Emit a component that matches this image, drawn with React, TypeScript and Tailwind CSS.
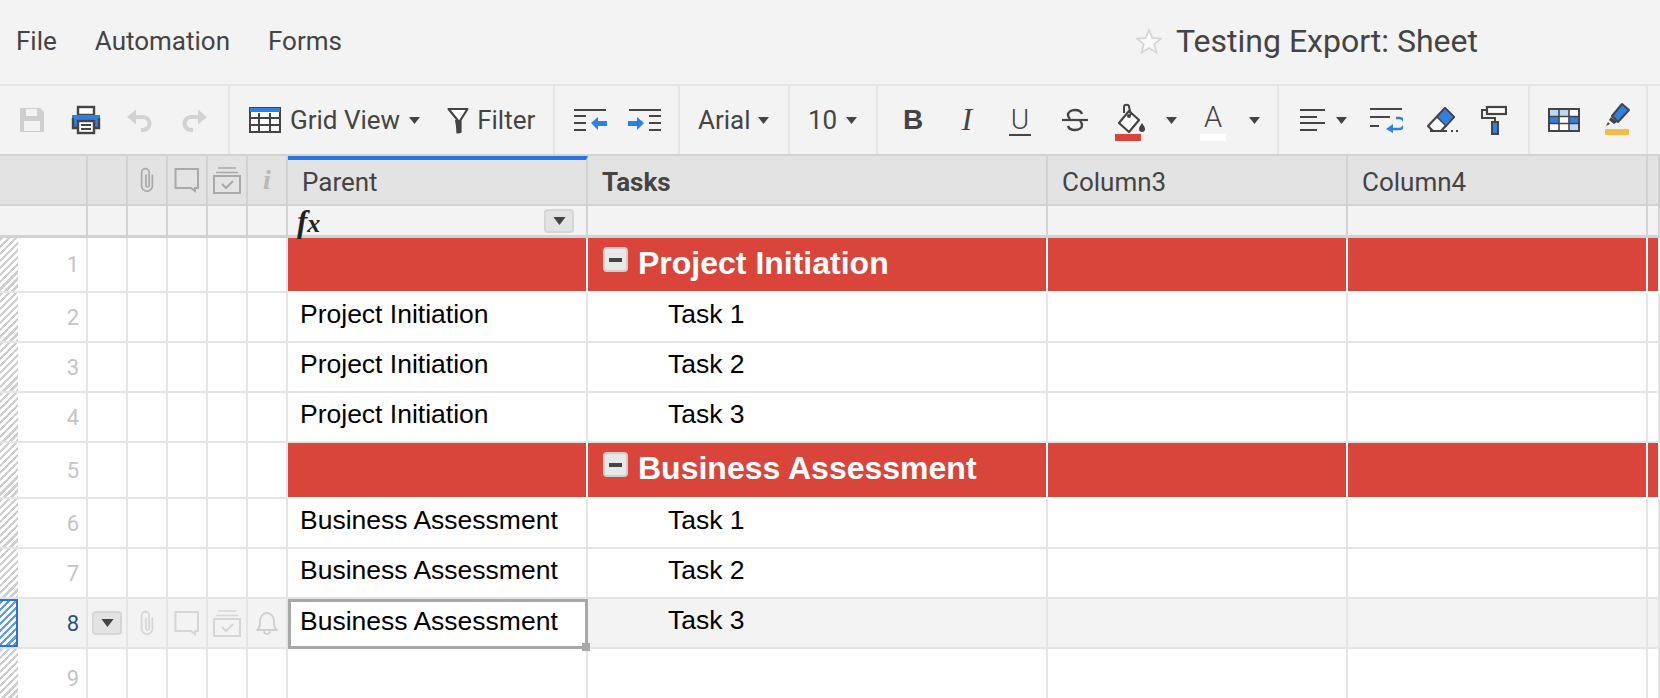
import React from "react";

const roboto = "font-['Roboto',sans-serif]";
const arial = "font-['Liberation_Sans',Arial,sans-serif]";

function Caret({ className = "" }: { className?: string }) {
  return (
    <svg width="13" height="9" viewBox="0 0 13 9" className={className}>
      <path d="M1 1h11L6.500 8z" fill="#444" />
    </svg>
  );
}

function Ic({ w = 32, h = 32, children }: { w?: number; h?: number; children: React.ReactNode }) {
  return (
    <svg width={w} height={h} viewBox={`0 0 ${w} ${h}`} fill="none">
      {children}
    </svg>
  );
}

const D = "#444";
const B = "#2f80e4";

const Save = () => (
  <Ic>
    <path d="M4 4h20l4 4v20H4z" fill="#cfcfcf" />
    <rect x="10" y="5" width="11" height="7" fill="#f3f3f3" />
    <rect x="8" y="17" width="16" height="10" fill="#f3f3f3" />
  </Ic>
);
const Print = () => (
  <Ic>
    <rect x="8" y="3" width="16" height="8" fill="#fff" stroke={D} strokeWidth="2.400" />
    <path d="M2 11h28v14h-5v-5H7v5H2z" fill={B} />
    <path d="M3 14v10h4M29 14v10h-4" stroke={D} strokeWidth="2.400" />
    <rect x="8" y="17" width="16" height="12" fill="#fff" stroke={D} strokeWidth="2.400" />
    <path d="M11 21h10M11 25h10" stroke={D} strokeWidth="2" />
  </Ic>
);
const Undo = () => (
  <Ic>
    <path d="M9 13h10a6.500 6.500 0 0 1 0 13h-2" stroke="#d2d2d2" strokeWidth="4.200" />
    <path d="M12 5.500v15L3 13z" fill="#d2d2d2" />
  </Ic>
);
const Redo = () => (
  <Ic>
    <path d="M23 13H13a6.500 6.500 0 0 0 0 13h2" stroke="#d2d2d2" strokeWidth="4.200" />
    <path d="M20 5.500v15L29 13z" fill="#d2d2d2" />
  </Ic>
);
const GridIc = () => (
  <Ic w={32} h={26}>
    <rect x="1" y="1" width="30" height="24" fill="#fff" stroke={D} strokeWidth="2" />
    <rect x="1" y="1" width="30" height="4" fill={B} />
    <path d="M1 11h30M1 18h30M10 6v19M21 6v19" stroke={D} strokeWidth="2" />
  </Ic>
);
const FilterIc = () => (
  <Ic w={22} h={28}>
    <path d="M1.500 3h19l-7 11v12l-3 .5V14z" fill="#fff" stroke={D} strokeWidth="2.200" strokeLinejoin="round" />
    <path d="M8 14h6v13h-4z" fill={D} />
  </Ic>
);
const Indent = ({ flip }: { flip?: boolean }) => (
  <Ic w={34} h={24}>
    <g transform={flip ? "translate(34 0) scale(-1 1)" : undefined}>
      <path d="M1 2h32M1 8h12M1 15h12M1 22h12" stroke={D} strokeWidth="2" />
      <path d="M18 15l7-6v4h9v5h-9v4z" fill={B} />
    </g>
  </Ic>
);
const Strike = () => (
  <Ic w={28} h={28}>
    <path d="M21 8c-1-3-4-4-7-4-4 0-7 2-7 5 0 2 1 3 2 4M7 20c1 3 4 4 7 4 4 0 7-2 7-5 0-2-1-3-2-4" stroke={D} strokeWidth="2.400" />
    <path d="M1 14h26" stroke={D} strokeWidth="2.200" />
  </Ic>
);
const Paint = () => (
  <Ic w={30} h={36}>
    <path d="M13 8L3 20l10 9 10-12z" fill="#fff" stroke={D} strokeWidth="2.200" strokeLinejoin="round" />
    <path d="M8 10V4c0-3 5-3 5 0l2 8" stroke={D} strokeWidth="2" />
    <circle cx="13" cy="13" r="2" fill={D} />
    <path d="M26 20c2 3 3 4 3 6a3 3 0 0 1-6 0c0-2 1-3 3-6z" fill={D} />
  </Ic>
);
const Align = () => (
  <Ic w={28} h={24}>
    <path d="M2 2h25M2 9h17M2 15h25M2 22h17" stroke={D} strokeWidth="2" />
  </Ic>
);
const Wrap = () => (
  <Ic w={34} h={28}>
    <path d="M1 3h32M1 11h20M1 20h9" stroke={D} strokeWidth="2" />
    <path d="M27 12h3a3.500 3.500 0 0 1 0 11H21" stroke={B} strokeWidth="2.600" fill="none" />
    <path d="M24 18l-7 5 7 4z" fill={B} />
  </Ic>
);
const Eraser = () => (
  <Ic w={32} h={28}>
    <path d="M18 2l9 9-13 14H6l-5-5z" fill="#fff" stroke={D} strokeWidth="2.200" strokeLinejoin="round" />
    <path d="M18 2l9 9-8 9-9-9z" fill={B} stroke={D} strokeWidth="1.500" />
    <path d="M3 25h17" stroke={D} strokeWidth="2" />
    <path d="M24 25h2M29 25h2" stroke={D} strokeWidth="2" />
  </Ic>
);
const Roller = () => (
  <Ic w={26} h={30}>
    <rect x="6" y="2" width="19" height="7" fill="#fff" stroke={D} strokeWidth="2.200" />
    <path d="M6 5H1v8h13v5" stroke={D} strokeWidth="2" />
    <rect x="11" y="17" width="6" height="12" fill={B} stroke={D} strokeWidth="2" />
  </Ic>
);
const TableIc = () => (
  <Ic w={32} h={24}>
    <rect x="1" y="1" width="30" height="22" fill="#fff" />
    <rect x="1" y="1" width="20" height="7" fill="#bcd9f3" />
    <rect x="1" y="9" width="10" height="6" fill={B} />
    <rect x="21" y="9" width="10" height="6" fill={B} />
    <rect x="21" y="16" width="10" height="6" fill="#bcd9f3" />
    <rect x="1" y="1" width="30" height="22" stroke={D} strokeWidth="2" />
    <path d="M1 8.500h30M1 15.500h30M11 1v22M21 1v22" stroke={D} strokeWidth="1.600" />
  </Ic>
);
const Marker = () => (
  <Ic w={26} h={34}>
    <path d="M18 1l7 6-11 12-6-6z" fill={B} stroke={D} strokeWidth="2" strokeLinejoin="round" />
    <path d="M7 14l6 5-3 2-5-4zM4 19l2 2-4 2z" fill={D} />
    <rect x="1" y="26" width="24" height="6" rx="1" fill="#f2bc46" />
  </Ic>
);
const Clip = ({ c = "#a9a9a9" }: { c?: string }) => (
  <svg width="18" height="28" viewBox="0 0 16 26" fill="none">
    <path d="M13 8v10.500a5 5 0 0 1-10 0V6a3.500 3.500 0 0 1 7 0v12a1.500 1.500 0 0 1-3 0V8" stroke={c} strokeWidth="1.600" />
  </svg>
);
const Comment = ({ c = "#a9a9a9" }: { c?: string }) => (
  <Ic w={26} h={26}>
    <path d="M1.500 2h22.500v19h-3v3l-4-3H1.500z" stroke={c} strokeWidth="2" fill="none" />
  </Ic>
);
const Proof = ({ c = "#a9a9a9" }: { c?: string }) => (
  <Ic w={28} h={28}>
    <path d="M5 2h18M3 6.500h22" stroke={c} strokeWidth="1.600" />
    <rect x="1" y="10" width="26" height="17" stroke={c} strokeWidth="2" />
    <path d="M9 18l4 4 7-7" stroke={c} strokeWidth="2" />
  </Ic>
);
const Bell = ({ c = "#cfcfcf" }: { c?: string }) => (
  <Ic w={22} h={26}>
    <path d="M1 20c3-2 3-5 3-9s3-8 7-8 7 4 7 8 0 7 3 9z" stroke={c} strokeWidth="1.800" strokeLinejoin="round" />
    <path d="M8 21c0 4 6 4 6 0" stroke={c} strokeWidth="1.600" />
  </Ic>
);
const Star = () => (
  <Ic w={26} h={26}>
    <path d="M13 2l3.300 8 8.700.7-6.700 5.400 2.200 8.600L13 20l-7.500 4.700 2.200-8.600L1 10.700 9.700 10z" fill="#fafafa" stroke="#d5d5d5" strokeWidth="1.800" />
  </Ic>
);

function DropBtn() {
  return (
    <span className="flex h-[24px] w-[30px] items-center justify-center rounded-[4px] border-2 border-[#d6d6d6] bg-[#e3e3e3]">
      <Caret className="h-[10px] w-[15px]" />
    </span>
  );
}

function Tool({ w = 54, children }: { w?: number; children: React.ReactNode }) {
  return (
    <div className="flex h-full shrink-0 items-center justify-center" style={{ width: w }}>
      {children}
    </div>
  );
}

function Group({ w, children }: { w: number; children: React.ReactNode }) {
  return (
    <div className="flex h-full shrink-0 items-center border-r-2 border-[#e5e5e5]" style={{ width: w }}>
      {children}
    </div>
  );
}

function Toolbar() {
  return (
    <div className={`flex h-[70px] border-b-2 border-[#d2d2d2] bg-[#f3f3f3] text-[26px] text-[#444] ${roboto}`}>
      <Group w={230}>
        <div className="w-[5px]" />
        <Tool><Save /></Tool>
        <Tool><Print /></Tool>
        <Tool><Undo /></Tool>
        <Tool><Redo /></Tool>
      </Group>
      <Group w={325}>
        <div className="flex items-center pl-[19px]">
          <GridIc />
          <span className="ml-[9px]">Grid View</span>
          <Caret className="ml-[8px]" />
          <span className="ml-[26px] flex"><FilterIc /></span>
          <span className="ml-[8px]">Filter</span>
        </div>
      </Group>
      <Group w={125}>
        <div className="flex items-center gap-[21px] pl-[18px]">
          <Indent />
          <Indent flip />
        </div>
      </Group>
      <Group w={110}>
        <span className="ml-[18px]">Arial</span>
        <Caret className="ml-[6px]" />
      </Group>
      <Group w={88}>
        <span className="ml-[18px]">10</span>
        <Caret className="ml-[8px]" />
      </Group>
      <Group w={401}>
        <div className="w-[8px]" />
        <Tool><span className={`text-[28px] font-bold ${arial}`}>B</span></Tool>
        <Tool><span className="font-['Liberation_Serif',serif] text-[31px] italic">I</span></Tool>
        <Tool>
          <span className="-ml-[2px] border-b-2 border-[#444] px-[2px] text-[28px] leading-[29px] font-light">U</span>
        </Tool>
        <Tool><Strike /></Tool>
        <div className="flex w-[58px] flex-col items-center pt-[4px]">
          <Paint />
          <div className="-mt-[5px] -ml-[6px] h-[7px] w-[26px] bg-[#d9453a]" />
        </div>
        <Tool w={22}><Caret /></Tool>
        <div className="ml-[8px] flex w-[46px] flex-col items-center pt-[2px]">
          <span className="text-[29px] leading-[31px] font-light">A</span>
          <div className="mt-[1px] h-[7px] w-[26px] bg-white" />
        </div>
        <Tool w={36}><Caret /></Tool>
      </Group>
      <Group w={251}>
        <div className="w-[19px]" />
        <Align />
        <Caret className="ml-[9px]" />
        <div className="ml-[21px] flex"><Wrap /></div>
        <div className="ml-[24px] flex"><Eraser /></div>
        <div className="ml-[22px] flex"><Roller /></div>
      </Group>
      <Group w={118}>
        <div className="ml-[18px] flex"><TableIc /></div>
        <div className="ml-[24px] flex"><Marker /></div>
      </Group>
    </div>
  );
}

const gridCols =
  "grid grid-rows-[100%] grid-cols-[88px_40px_40px_40px_40px_40px_300px_460px_300px_300px_12px]";

function HeaderRow() {
  const c = "flex items-center justify-center border-r-2 border-b-2 border-[#d2d2d2] bg-[#e3e3e3]";
  const t = "flex items-center pl-[14px] border-r-2 border-b-2 border-[#d2d2d2] bg-[#e3e3e3] text-[26px] text-[#444]";
  return (
    <div className={`${gridCols} h-[50px] ${roboto}`}>
      <div className={c} />
      <div className={c} />
      <div className={c}><Clip /></div>
      <div className={c}><Comment /></div>
      <div className={c}><Proof /></div>
      <div className={c}>
        <span className="font-['Liberation_Serif',serif] text-[28px] leading-none font-bold text-[#b8b8b8] italic">i</span>
      </div>
      <div className={`${t} border-t-[4px] border-t-[#2a74e0]`}>Parent</div>
      <div className={`${t} pt-[4px] font-bold`}>Tasks</div>
      <div className={`${t} pt-[4px]`}>Column3</div>
      <div className={`${t} pt-[4px]`}>Column4</div>
      <div className={c} />
    </div>
  );
}

function FilterRow() {
  const c = "relative border-r-2 border-b-[3px] border-[#d2d2d2] bg-[#f3f3f3]";
  return (
    <div className={`${gridCols} h-[32px]`}>
      <div className={c} />
      <div className={c} />
      <div className={c} />
      <div className={c} />
      <div className={c} />
      <div className={c} />
      <div className={`${c} flex items-center justify-between pr-[12px] pl-[9px]`}>
        <span className="pt-[2px] font-['Liberation_Serif',serif] text-[31px] leading-none font-bold text-[#222] italic">
          f<span className="text-[26px]">x</span>
        </span>
        <DropBtn />
      </div>
      <div className={c} />
      <div className={c} />
      <div className={c} />
      <div className={c} />
    </div>
  );
}

function Hatch({ active }: { active?: boolean }) {
  return (
    <div
      className={
        active
          ? "h-full w-[18px] shrink-0 border-2 border-l-0 border-[#2a74e0] bg-[repeating-linear-gradient(135deg,#5a9cf0_0,#5a9cf0_2.500px,#ffffff_2.500px,#ffffff_5px)]"
          : "h-full w-[18px] shrink-0 bg-[repeating-linear-gradient(135deg,#cfcfcf_0,#cfcfcf_2.500px,#ffffff_2.500px,#ffffff_5px)]"
      }
    />
  );
}

type RowProps = {
  n: number;
  h: number;
  red?: string;
  parent?: string;
  task?: string;
  active?: boolean;
};

function Row({ n, h, red, parent, task, active }: RowProps) {
  const line = "border-r-2 border-b-2 border-[#e5e5e5]";
  const bg = active ? "bg-[#f3f3f3]" : "bg-white";
  const gutter = `${line} ${bg} flex items-center justify-center`;
  const redCell = "border-r-2 border-b-2 border-white bg-[#d9453a]";
  const cell = `${line} ${bg}`;
  const text = `flex items-center pb-[4px] text-[26.500px] text-black ${arial}`;
  return (
    <div className={gridCols} style={{ height: h }}>
      <div className={`flex items-center border-r-2 border-b-2 border-[#e5e5e5] ${bg}`}>
        <Hatch active={active} />
        <span
          className={`ml-auto pr-[7px] text-[22px] ${roboto} ${active ? "text-[#2b5180]" : "text-[#c4c4c4]"}`}
        >
          {n}
        </span>
      </div>
      <div className={gutter}>{active && <DropBtn />}</div>
      <div className={gutter}>{active && <Clip c="#d6d6d6" />}</div>
      <div className={gutter}>{active && <Comment c="#d6d6d6" />}</div>
      <div className={gutter}>{active && <Proof c="#d6d6d6" />}</div>
      <div className={gutter}>{active && <Bell />}</div>
      {red ? (
        <>
          <div className={redCell} />
          <div className={`${redCell} flex items-center pb-[4px] pl-[15px]`}>
            <span className="mt-[9px] flex h-[25px] w-[25px] items-center justify-center self-start rounded-[4px] border-2 border-[#cfcfcf] bg-[#e8e8e8]">
              <span className="h-[4px] w-[13px] bg-[#444]" />
            </span>
            <span className={`ml-[10px] text-[32px] leading-none font-bold text-white ${arial}`}>{red}</span>
          </div>
          <div className={redCell} />
          <div className={redCell} />
          <div className={redCell} />
        </>
      ) : (
        <>
          <div className={active ? "relative" : `${cell} pl-[12px] ${text}`}>
            {active ? (
              <div className={`flex h-full items-center border-[3px] border-[#a8a8a8] bg-white pb-[4px] pl-[9px] text-[26.500px] text-black ${arial}`}>
                {parent}
                <span className="absolute -right-[2px] -bottom-[2px] h-[8px] w-[8px] bg-[#a8a8a8]" />
              </div>
            ) : (
              parent
            )}
          </div>
          <div className={`${cell} pl-[80px] ${text}`}>{task}</div>
          <div className={cell} />
          <div className={cell} />
          <div className={cell} />
        </>
      )}
    </div>
  );
}

export default function App() {
  return (
    <div className="h-[698px] w-[1660px] overflow-hidden bg-white">
      <div className={`flex h-[86px] items-center justify-between border-b-2 border-[#e5e5e5] bg-[#f3f3f3] pb-[2px] text-[26px] text-[#444] ${roboto}`}>
        <div className="flex items-center gap-[38px] pl-[16px]">
          <span>File</span>
          <span>Automation</span>
          <span>Forms</span>
        </div>
        <div className="flex items-center pr-[182px]">
          <Star />
          <span className="ml-[14px] text-[32px]">Testing Export: Sheet</span>
        </div>
      </div>
      <Toolbar />
      <HeaderRow />
      <FilterRow />
      <Row n={1} h={55} red="Project Initiation" />
      <Row n={2} h={50} parent="Project Initiation" task="Task 1" />
      <Row n={3} h={50} parent="Project Initiation" task="Task 2" />
      <Row n={4} h={50} parent="Project Initiation" task="Task 3" />
      <Row n={5} h={56} red="Business Assessment" />
      <Row n={6} h={50} parent="Business Assessment" task="Task 1" />
      <Row n={7} h={50} parent="Business Assessment" task="Task 2" />
      <Row n={8} h={50} parent="Business Assessment" task="Task 3" active />
      <Row n={9} h={60} parent="" task="" />
    </div>
  );
}
